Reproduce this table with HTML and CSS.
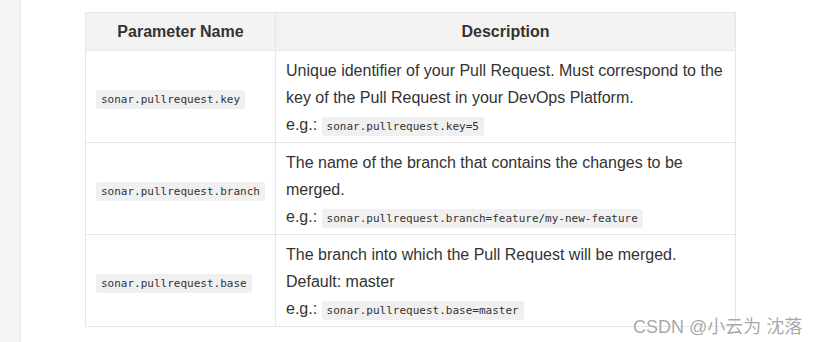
FILE: index.html
```html
<!DOCTYPE html>
<html lang="en">
<head>
    <meta charset="UTF-8">
    <meta name="viewport" content="width=device-width, initial-scale=1.0">
    <title>Pull Request Parameters</title>
    <link rel="stylesheet" href="styles.css">
</head>
<body>
    <div class="page">
        <div class="sidebar"></div>
        <div class="content">
            <table class="params">
                <thead>
                    <tr>
                        <th class="col-name">Parameter Name</th>
                        <th>Description</th>
                    </tr>
                </thead>
                <tbody>
                    <tr>
                        <td><code>sonar.pullrequest.key</code></td>
                        <td>
                            Unique identifier of your Pull Request. Must correspond to the key of the Pull Request in your DevOps Platform.
                            <div class="example">e.g.: <code>sonar.pullrequest.key=5</code></div>
                        </td>
                    </tr>
                    <tr>
                        <td><code>sonar.pullrequest.branch</code></td>
                        <td>
                            The name of the branch that contains the changes to be merged.
                            <div class="example">e.g.: <code>sonar.pullrequest.branch=feature/my-new-feature</code></div>
                        </td>
                    </tr>
                    <tr>
                        <td><code>sonar.pullrequest.base</code></td>
                        <td>
                            The branch into which the Pull Request will be merged.<br>
                            Default: master
                            <div class="example">e.g.: <code>sonar.pullrequest.base=master</code></div>
                        </td>
                    </tr>
                </tbody>
            </table>
        </div>
    </div>
    <div class="watermark">CSDN @小云为 沈落</div>
</body>
</html>
```

FILE: styles.css
```css
body {
    margin: 0;
    font-family: 'Liberation Sans', Arial, sans-serif;
    font-size: 16px;
    color: #333333;
    background: #ffffff;
}
.page {
    display: flex;
    height: 342px;
}
.sidebar {
    width: 20px;
    background-color: #f4f4f4;
    border-right: 1px solid #e6e6e6;
}
.content {
    padding: 12px 0 0 64px;
}
.params {
    border-collapse: collapse;
    width: 651px;
}
.params th,
.params td {
    border: 1px solid #e6e6e6;
    padding: 6px 10px 4px 10px;
    line-height: 27px;
}
.params th {
    background-color: #f3f3f3;
    font-weight: bold;
    text-align: center;
    padding: 5px 10px;
}
.col-name {
    width: 169px;
}
.params td {
    vertical-align: middle;
}
code {
    font-family: 'DejaVu Sans Mono', monospace;
    font-size: 11px;
    background-color: #f0f0f0;
    border-radius: 3px;
    padding: 3px 5px;
    line-height: 13px;
}
.watermark {
    position: absolute;
    left: 633px;
    top: 312px;
    font-family: 'Liberation Sans', Arial, 'Noto Sans CJK SC', sans-serif;
    font-size: 18px;
    color: rgba(140, 140, 140, 0.75);
    padding: 0 6px 0 0;
    text-shadow: 0 0 2px #ffffff;
}
```
